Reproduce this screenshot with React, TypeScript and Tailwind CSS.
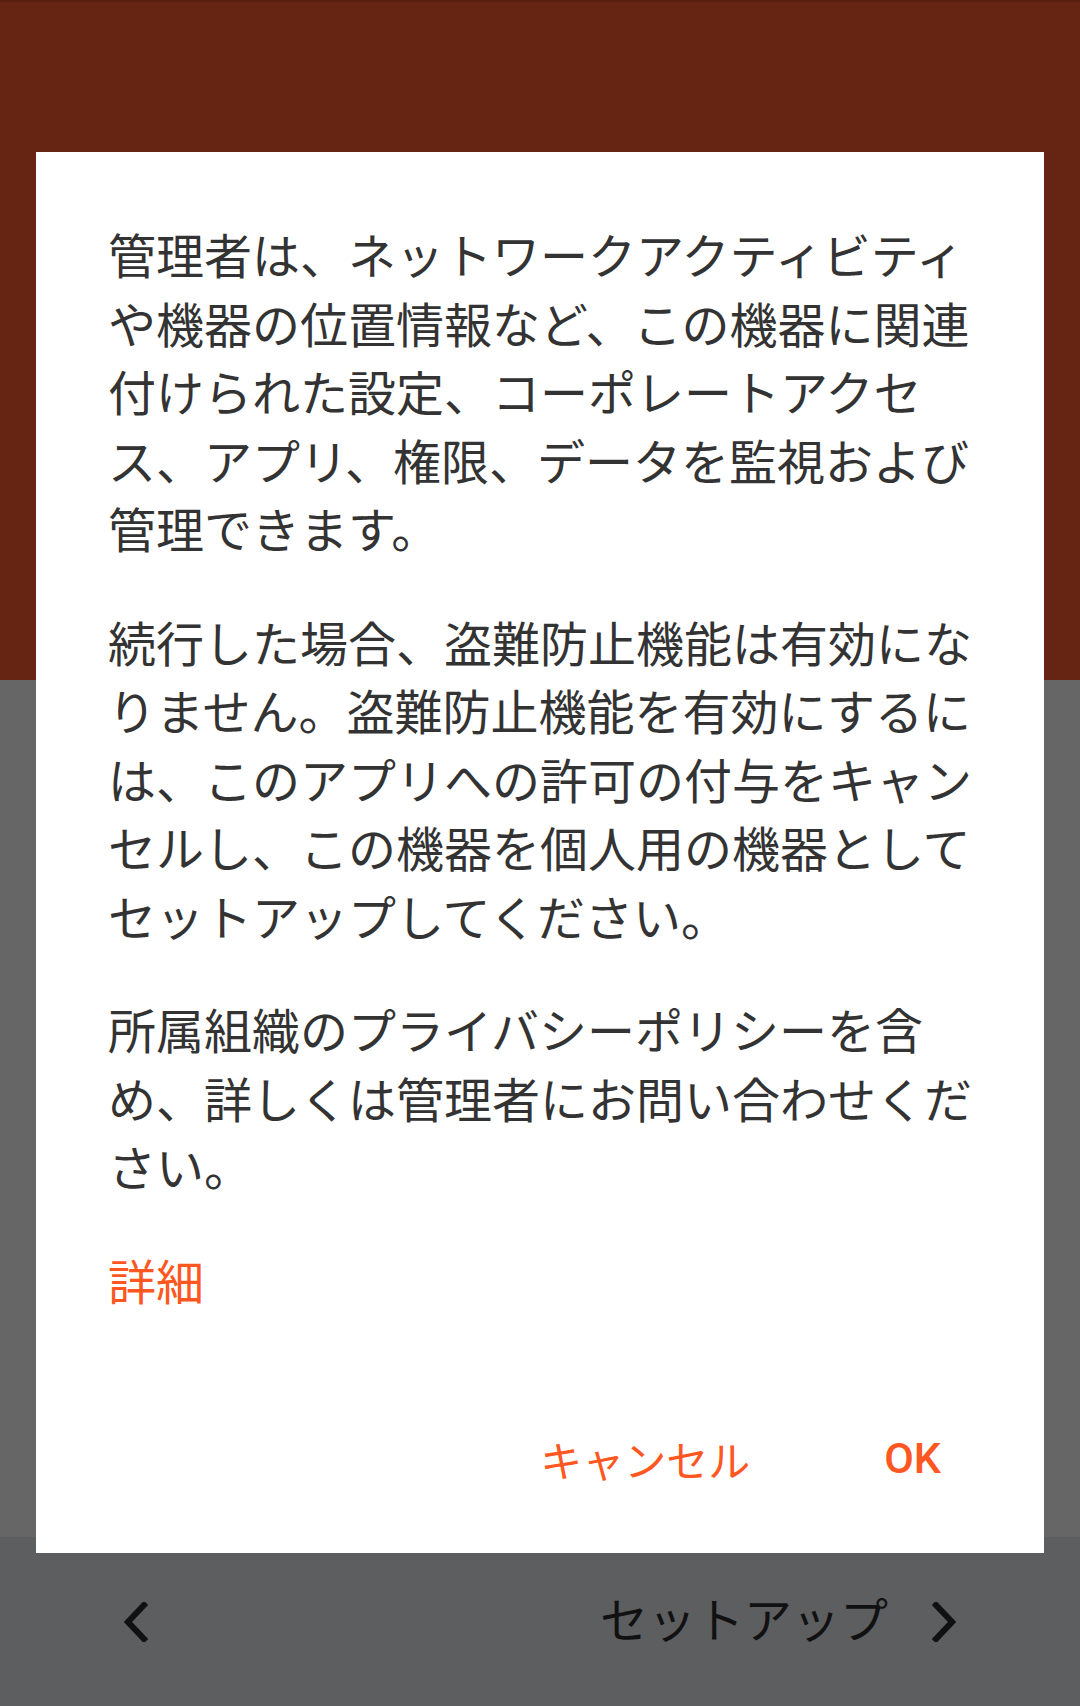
const jp = { fontFamily: '"Noto Sans CJK JP", "Noto Sans", sans-serif' };

const Chevron = ({ dir }: { dir: 'left' | 'right' }) => (
  <svg width="24" height="40" viewBox="0 0 24 40" fill="none">
    <path
      d={dir === 'left' ? 'M20 3 L4 20 L20 37' : 'M4 3 L20 20 L4 37'}
      stroke="#111111"
      strokeWidth="6"
      strokeLinecap="square"
      strokeLinejoin="miter"
    />
  </svg>
);

export default function App() {
  return (
    <div className="relative w-[1080px] h-[1706px] overflow-hidden" style={jp}>
      <div className="flex h-full flex-col">
        <div className="h-[680px] bg-[#662512] border-t-2 border-[#5a200f]" />
        <div className="flex-1 bg-[#666666]" />
        <div className="flex h-[169px] items-center justify-between bg-[#5d5e60] pl-[124px] pr-[124px]">
          <Chevron dir="left" />
          <div className="flex items-center gap-[44px]">
            <span className="mb-[10px] text-[48px] leading-none text-[#111111]">セットアップ</span>
            <Chevron dir="right" />
          </div>
        </div>
      </div>

      {/* dialog */}
      <div className="absolute left-[36px] top-[152px] w-[1008px] bg-white pl-[72px] pr-[56px] pt-[67px] pb-[65px]">
        <div className="flex flex-col gap-[45px] text-[48px] leading-[68.5px] text-[#333333]">
          <p>
            管理者は、ネットワークアクティビティや機器の位置情報など、この機器に関連付けられた設定、コーポレートアクセス、アプリ、権限、データを監視および管理できます。
          </p>
          <p>
            続行した場合、盗難防止機能は有効になりません。盗難防止機能を有効にするには、このアプリへの許可の付与をキャンセルし、この機器を個人用の機器としてセットアップしてください。
          </p>
          <p>所属組織のプライバシーポリシーを含め、詳しくは管理者にお問い合わせください。</p>
          <p className="text-[#ff5722]">詳細</p>
        </div>
        <div className="mt-[115px] flex h-[60px] items-center justify-end gap-[134px] pr-[47px] text-[42px] text-[#ff5722]">
          <span>キャンセル</span>
          <span style={{ fontFamily: 'Roboto, "Noto Sans", sans-serif' }} className="text-[43px] font-medium">
            OK
          </span>
        </div>
      </div>
    </div>
  );
}
